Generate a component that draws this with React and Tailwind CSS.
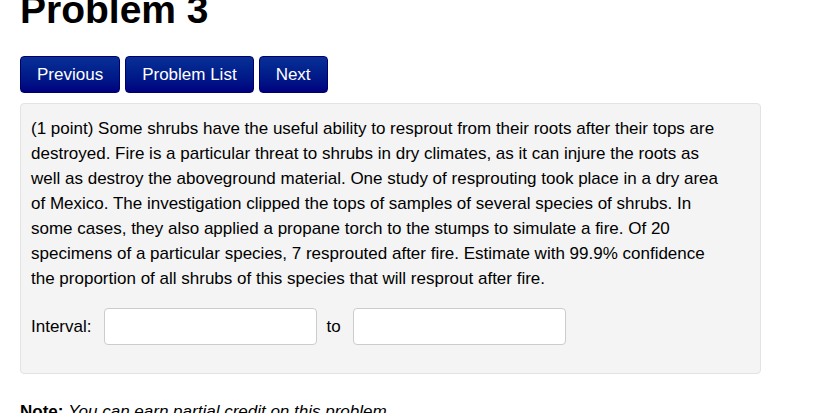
export default function App() {
  const btn =
    "h-[37px] px-4 rounded-[4px] text-white text-[17px] bg-gradient-to-b from-[#0a2f96] to-[#00007f] border border-[#00006a] flex items-center";
  const lines = [
    "(1 point) Some shrubs have the useful ability to resprout from their roots after their tops are",
    "destroyed. Fire is a particular threat to shrubs in dry climates, as it can injure the roots as",
    "well as destroy the aboveground material. One study of resprouting took place in a dry area",
    "of Mexico. The investigation clipped the tops of samples of several species of shrubs. In",
    "some cases, they also applied a propane torch to the stumps to simulate a fire. Of 20",
    "specimens of a particular species, 7 resprouted after fire. Estimate with 99.9% confidence",
    "the proportion of all shrubs of this species that will resprout after fire.",
  ];
  return (
    <div className="w-[840px] h-[413px] overflow-hidden bg-white text-black" style={{ fontFamily: '"Liberation Sans", Arial, sans-serif' }}>
      <div className="pl-[20px] flex flex-col">
        <h1 className="text-[39px] font-bold leading-[19px] h-[19px] m-0">Problem 3</h1>
        <div className="flex gap-[5px] mt-[37px]">
          <button className={btn}>Previous</button>
          <button className={btn}>Problem List</button>
          <button className={btn}>Next</button>
        </div>
        <div className="mt-[10px] w-[741px] border border-[#e3e3e3] rounded-[4px] bg-[#f4f4f4] pt-[12px] pl-[10px] pr-[6px] pb-[28px]">
          <p className="text-[17px] leading-[25px] m-0 whitespace-nowrap">
            {lines.map((l, i) => (
              <span key={i}>
                {l}
                {i < lines.length - 1 && <br />}
              </span>
            ))}
          </p>
          <div className="flex items-center mt-[17px] text-[17px]">
            <span>Interval:</span>
            <input className="ml-[13px] w-[213px] h-[37px] bg-white border border-[#cccccc] rounded-[4px]" />
            <span className="ml-[9px]">to</span>
            <input className="ml-[12px] w-[213px] h-[37px] bg-white border border-[#cccccc] rounded-[4px]" />
          </div>
        </div>
        <p className="mt-[25px] text-[17px] leading-[25px]">
          <b>Note:</b> <i>You can earn partial credit on this problem.</i>
        </p>
      </div>
    </div>
  );
}
